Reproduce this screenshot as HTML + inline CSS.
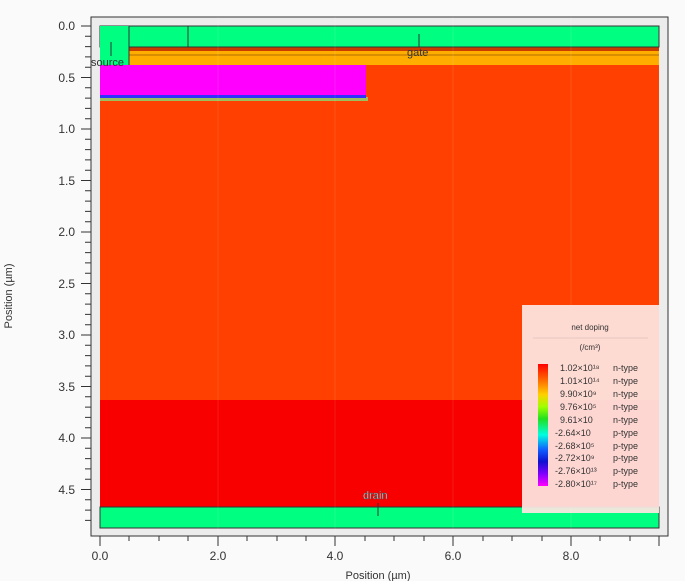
<!DOCTYPE html>
<html><head><style>body{margin:0;background:#fafafa;}svg{display:block}text{font-family:"Liberation Sans",sans-serif;}</style></head><body>
<svg width="685" height="581" viewBox="0 0 685 581">
<rect x="0" y="0" width="685" height="581" fill="#fafafa"/>
<rect x="91" y="17" width="577" height="519" fill="#ececec" stroke="#333" stroke-width="1"/>
<rect x="100" y="26" width="559" height="502" fill="#ff4000"/>
<rect x="100" y="400" width="559" height="107" fill="#f80000"/>
<rect x="100" y="507" width="559" height="21" fill="#00ff80" stroke="#333" stroke-width="1"/>
<rect x="100" y="26" width="559" height="21" fill="#00ff80" stroke="#333" stroke-width="1"/>
<rect x="100" y="26" width="29" height="39" fill="#00ff80"/>
<rect x="129" y="47" width="530" height="4" fill="#c83c00"/>
<rect x="129" y="51" width="530" height="14" fill="#ffae00"/>
<line x1="129" y1="55" x2="659" y2="55" stroke="#9a5a00" stroke-width="0.8"/>
<line x1="129" y1="26" x2="129" y2="65" stroke="#333"/>
<line x1="188" y1="26" x2="188" y2="47" stroke="#333"/>
<line x1="129" y1="47" x2="659" y2="47" stroke="#333"/>
<rect x="100" y="97" width="268" height="4" fill="#9cc060"/>
<rect x="100" y="65" width="266" height="32" fill="#ff00ff"/>
<rect x="100" y="95" width="266" height="3" fill="#3030ff"/>
<line x1="111" y1="42" x2="111" y2="56" stroke="#333"/>
<line x1="419" y1="34" x2="419" y2="47" stroke="#333"/>
<line x1="378" y1="503" x2="378" y2="516" stroke="#333"/>
<text x="91" y="66" font-size="11" fill="#333">source</text>
<text x="407" y="56" font-size="11" fill="#333">gate</text>
<text x="363" y="499" font-size="11" fill="#fff" stroke="#555" stroke-width="0.5">drain</text>
<g stroke="#fff" stroke-opacity="0.1" stroke-width="1">
<line x1="218" y1="17" x2="218" y2="536"/><line x1="335" y1="17" x2="335" y2="536"/><line x1="453" y1="17" x2="453" y2="536"/><line x1="571" y1="17" x2="571" y2="536"/>
</g>
<rect x="522" y="305" width="137" height="208" fill="#fde6e2" fill-opacity="0.93"/>
<text x="590" y="330" font-size="8" text-anchor="middle" fill="#333">net doping</text>
<line x1="533" y1="338" x2="648" y2="338" stroke="#e8c8c4"/>
<text x="590" y="350" font-size="8" text-anchor="middle" fill="#333">(/cm³)</text>
<defs><linearGradient id="g" x1="0" y1="0" x2="0" y2="1">
<stop offset="0" stop-color="#ff0000"/><stop offset="0.12" stop-color="#ff6000"/><stop offset="0.25" stop-color="#ffd000"/><stop offset="0.35" stop-color="#a0ff00"/><stop offset="0.45" stop-color="#20e020"/><stop offset="0.58" stop-color="#00ffe0"/><stop offset="0.7" stop-color="#1060ff"/><stop offset="0.8" stop-color="#1010d0"/><stop offset="0.9" stop-color="#8000ff"/><stop offset="1" stop-color="#ff00ff"/></linearGradient></defs>
<rect x="538" y="364" width="10" height="122" fill="url(#g)"/>
<g font-size="9" fill="#333">
<text x="560" y="371">1.02×10¹⁸</text><text x="613" y="371">n-type</text>
<text x="560" y="384">1.01×10¹⁴</text><text x="613" y="384">n-type</text>
<text x="560" y="397">9.90×10⁹</text><text x="613" y="397">n-type</text>
<text x="560" y="410">9.76×10⁵</text><text x="613" y="410">n-type</text>
<text x="560" y="423">9.61×10</text><text x="613" y="423">n-type</text>
<text x="555" y="436">-2.64×10</text><text x="613" y="436">p-type</text>
<text x="555" y="449">-2.68×10⁵</text><text x="613" y="449">p-type</text>
<text x="555" y="461">-2.72×10⁹</text><text x="613" y="461">p-type</text>
<text x="555" y="474">-2.76×10¹³</text><text x="613" y="474">p-type</text>
<text x="555" y="487">-2.80×10¹⁷</text><text x="613" y="487">p-type</text>
</g>
<g stroke="#333" stroke-width="1">
<line x1="81" y1="26" x2="91" y2="26"/><line x1="81" y1="77.5" x2="91" y2="77.5"/><line x1="81" y1="129" x2="91" y2="129"/><line x1="81" y1="180.5" x2="91" y2="180.5"/><line x1="81" y1="232" x2="91" y2="232"/><line x1="81" y1="283.5" x2="91" y2="283.5"/><line x1="81" y1="335" x2="91" y2="335"/><line x1="81" y1="386.5" x2="91" y2="386.5"/><line x1="81" y1="438" x2="91" y2="438"/><line x1="81" y1="489.5" x2="91" y2="489.5"/>
</g>
<g stroke="#333"><path d="M85 36.3H91M85 46.6H91M85 56.9H91M85 67.2H91M85 87.8H91M85 98.1H91M85 108.4H91M85 118.7H91M85 139.3H91M85 149.6H91M85 159.9H91M85 170.2H91M85 190.8H91M85 201.1H91M85 211.4H91M85 221.7H91M85 242.3H91M85 252.6H91M85 262.9H91M85 273.2H91M85 293.8H91M85 304.1H91M85 314.4H91M85 324.7H91M85 345.3H91M85 355.6H91M85 365.9H91M85 376.2H91M85 396.8H91M85 407.1H91M85 417.4H91M85 427.7H91M85 448.3H91M85 458.6H91M85 468.9H91M85 479.2H91M85 499.8H91M85 510.1H91M85 520.4H91"/></g>
<g font-size="12" fill="#333" text-anchor="end">
<text x="75" y="30">0.0</text><text x="75" y="82">0.5</text><text x="75" y="133">1.0</text><text x="75" y="185">1.5</text><text x="75" y="236">2.0</text><text x="75" y="288">2.5</text><text x="75" y="339">3.0</text><text x="75" y="391">3.5</text><text x="75" y="442">4.0</text><text x="75" y="494">4.5</text>
</g>
<text transform="translate(12,296) rotate(-90)" font-size="11" fill="#333" text-anchor="middle">Position (µm)</text>
<g stroke="#333">
<path d="M100 536V546M159 536V541M218 536V546M277 536V541M335 536V546M394 536V541M453 536V546M512 536V541M571 536V546M630 536V541M659 536V546"/>
<path d="M129 536V541M188 536V541M247 536V541M306 536V541M365 536V541M424 536V541M483 536V541M542 536V541M600 536V541"/>
</g>
<g font-size="12" fill="#333" text-anchor="middle">
<text x="100" y="560">0.0</text><text x="218" y="560">2.0</text><text x="335" y="560">4.0</text><text x="453" y="560">6.0</text><text x="571" y="560">8.0</text>
</g>
<text x="378" y="579" font-size="11" fill="#333" text-anchor="middle">Position (µm)</text>
</svg>
</body></html>
